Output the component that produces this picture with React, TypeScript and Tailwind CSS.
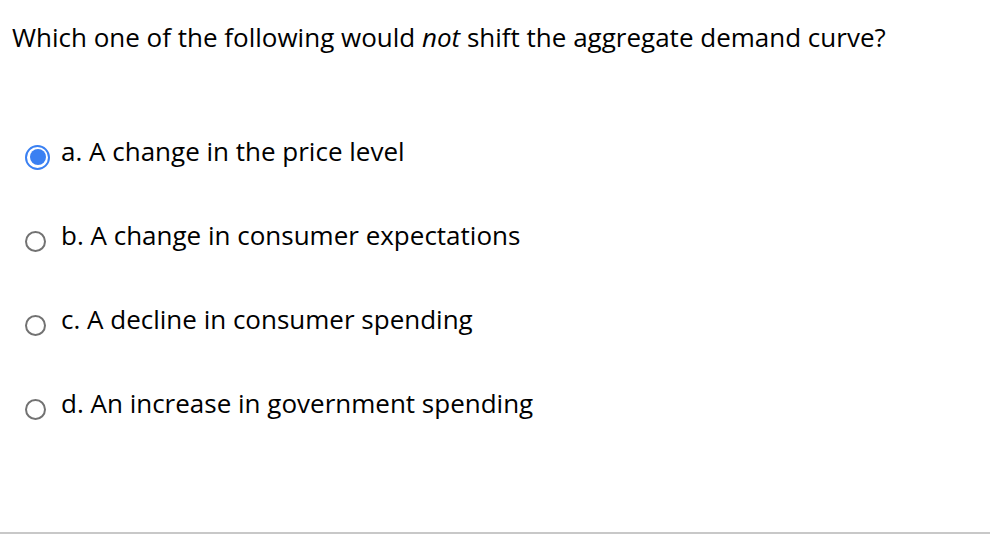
import { useState } from 'react'

const OPTIONS = [
  { key: 'a', text: 'A change in the price level' },
  { key: 'b', text: 'A change in consumer expectations' },
  { key: 'c', text: 'A decline in consumer spending' },
  { key: 'd', text: 'An increase in government spending' },
]

function Radio({ checked }: { checked: boolean }) {
  if (checked) {
    return (
      <span className='flex size-[25px] items-center justify-center rounded-full border-[2px] border-[#3a80f2] bg-white'>
        <span className='size-[16px] rounded-full bg-[#3a80f2]' />
      </span>
    )
  }
  return <span className='size-[21px] rounded-full border-[2px] border-[#727272] bg-white' />
}

export default function App() {
  const [selected, setSelected] = useState('a')

  return (
    <div className='flex h-[534px] w-[990px] flex-col bg-white text-black' style={{ fontFamily: '"Open Sans", "Liberation Sans", sans-serif' }}>
      <div className='flex-1'>
        <p className='pl-[12px] pt-[19px] text-[26px] leading-[36px]'>
          Which one of the following would <em>not</em> shift the aggregate demand curve?
        </p>
        <div className='mt-[78px] flex flex-col gap-[48px]'>
          {OPTIONS.map((o) => (
            <label key={o.key} className='flex h-[36px] cursor-pointer items-start' onClick={() => setSelected(o.key)}>
              <span className='mt-[11px] flex h-[26px] w-[61px] items-center justify-start pl-[25px]'>
                <Radio checked={selected === o.key} />
              </span>
              <span className='text-[26px] leading-[36px]'>
                {o.key}. {o.text}
              </span>
            </label>
          ))}
        </div>
      </div>
      <div className='h-[2px] bg-[#c8c8c8]' />
    </div>
  )
}
